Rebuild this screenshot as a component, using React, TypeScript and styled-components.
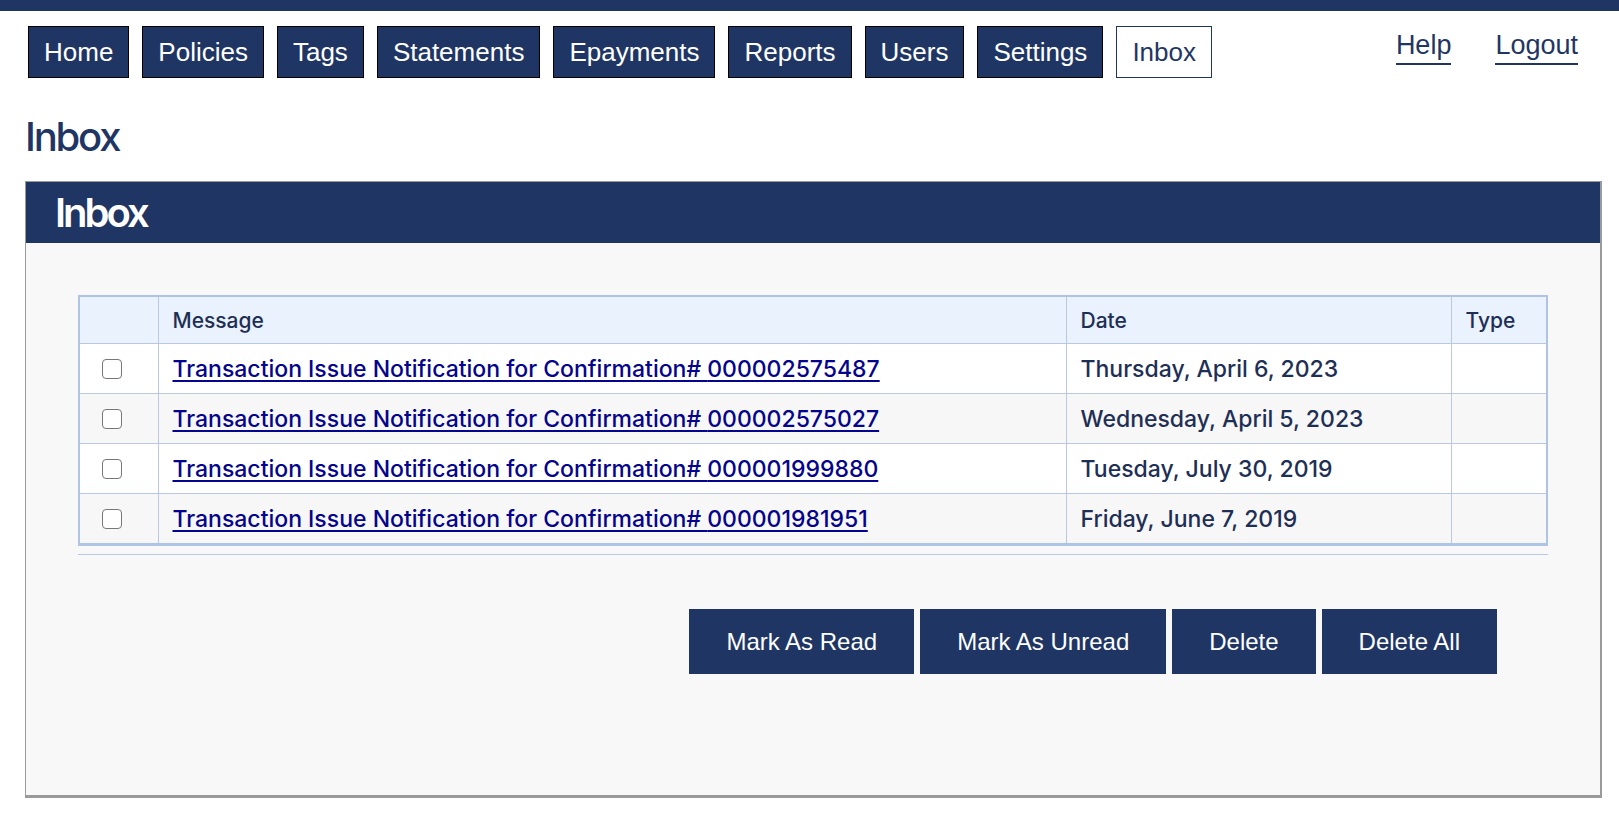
import styled, { createGlobalStyle } from 'styled-components'

const navy = '#1f3665'

const GlobalStyle = createGlobalStyle`
  html, body {
    margin: 0;
    padding: 0;
    background: #ffffff;
  }
  body {
    font-family: Inter, 'Liberation Sans', Arial, sans-serif;
  }
`

const TopBar = styled.div`
  height: 11px;
  background: ${navy};
`

const Header = styled.header`
  display: flex;
  justify-content: space-between;
  align-items: flex-start;
  padding: 15px 41px 0 28px;
`

const NavList = styled.nav`
  display: flex;
  gap: 13px;
`

const NavItem = styled.a<{ $active?: boolean }>`
  display: block;
  padding: 10px 15px;
  font-family: 'Liberation Sans', Arial, sans-serif;
  font-size: 26px;
  line-height: 30px;
  text-decoration: none;
  color: ${({ $active }) => ($active ? navy : '#ffffff')};
  background: ${({ $active }) => ($active ? '#ffffff' : navy)};
  border: 1px solid ${({ $active }) => ($active ? navy : '#000000')};
  cursor: pointer;
`

const UserLinks = styled.div`
  display: flex;
  gap: 44px;
  padding-top: 4px;
`

const UserLink = styled.a`
  font-family: 'Liberation Sans', Arial, sans-serif;
  font-size: 27px;
  line-height: 30px;
  color: ${navy};
  text-decoration: none;
  padding-bottom: 3px;
  border-bottom: 2px solid ${navy};
  cursor: pointer;
`

const PageTitle = styled.h1`
  margin: 35px 0 0 25px;
  font-family: Inter, sans-serif;
  font-size: 40px;
  line-height: 48px;
  font-weight: 500;
  letter-spacing: -2.2px;
  color: ${navy};
`

const Panel = styled.section`
  margin: 20px 17px 0 25px;
  border: 1px solid #9a9a9a;
  border-right-width: 2px;
  border-bottom-width: 3px;
  background: #f8f8f8;
`

const PanelHeader = styled.div`
  height: 61px;
  display: flex;
  align-items: center;
  padding-left: 29px;
  background: ${navy};
`

const PanelTitle = styled.h2`
  margin: 0;
  font-family: Inter, sans-serif;
  font-size: 40px;
  font-weight: 600;
  letter-spacing: -3px;
  color: #ffffff;
`

const PanelBody = styled.div`
  padding: 52px 52px 121px 52px;
`

const Table = styled.table`
  width: 100%;
  border-collapse: collapse;
  table-layout: fixed;
  border: 2px solid #afc3e4;
  border-bottom-width: 3px;
  font-family: Inter, sans-serif;
  font-size: 23px;
  font-weight: 500;
  color: #1e2f56;
`

const HeadCell = styled.th`
  height: 46px;
  padding: 0 14px;
  text-align: left;
  font-size: 21px;
  font-weight: 500;
  background: #eaf2fd;
  border: 1px solid #b9c9e5;
`

const Row = styled.tr<{ $alt: boolean }>`
  background: ${({ $alt }) => ($alt ? '#f7f7f7' : '#ffffff')};
`

const Cell = styled.td`
  height: 49px;
  padding: 0 14px;
  border: 1px solid #b9c9e5;
  white-space: nowrap;
`

const CheckCell = styled.td`
  height: 49px;
  padding: 0 0 0 22px;
  border: 1px solid #b9c9e5;
`

const Check = styled.input`
  appearance: none;
  display: block;
  width: 20px;
  height: 20px;
  margin: 0;
  border: 1.5px solid #777777;
  border-radius: 4px;
  background: #ffffff;
`

const MessageLink = styled.a`
  color: #04058c;
  text-decoration: underline;
  text-underline-offset: 3px;
  text-decoration-thickness: 2px;
  cursor: pointer;
`

const Pager = styled.div`
  height: 8px;
  border-bottom: 1px solid #b9c9e5;
`

const Actions = styled.div`
  display: flex;
  justify-content: flex-end;
  gap: 6px;
  margin-top: 54px;
  padding-right: 51px;
`

const ActionButton = styled.button`
  padding: 18px 37px;
  font-family: 'Liberation Sans', Arial, sans-serif;
  font-size: 24px;
  line-height: 29px;
  color: #ffffff;
  background: ${navy};
  border: none;
  border-radius: 0;
  cursor: pointer;
`

const navItems = ['Home', 'Policies', 'Tags', 'Statements', 'Epayments', 'Reports', 'Users', 'Settings', 'Inbox']

const messages = [
  { id: '000002575487', date: 'Thursday, April 6, 2023' },
  { id: '000002575027', date: 'Wednesday, April 5, 2023' },
  { id: '000001999880', date: 'Tuesday, July 30, 2019' },
  { id: '000001981951', date: 'Friday, June 7, 2019' },
]

const App = () => {
  return (
    <>
      <GlobalStyle />
      <TopBar />
      <Header>
        <NavList>
          {navItems.map((item) => (
            <NavItem key={item} $active={item === 'Inbox'}>
              {item}
            </NavItem>
          ))}
        </NavList>
        <UserLinks>
          <UserLink>Help</UserLink>
          <UserLink>Logout</UserLink>
        </UserLinks>
      </Header>

      <PageTitle>Inbox</PageTitle>

      <Panel>
        <PanelHeader>
          <PanelTitle>Inbox</PanelTitle>
        </PanelHeader>
        <PanelBody>
          <Table>
            <colgroup>
              <col style={{ width: 79 }} />
              <col style={{ width: 908 }} />
              <col style={{ width: 385 }} />
              <col />
            </colgroup>
            <thead>
              <tr>
                <HeadCell />
                <HeadCell>Message</HeadCell>
                <HeadCell>Date</HeadCell>
                <HeadCell>Type</HeadCell>
              </tr>
            </thead>
            <tbody>
              {messages.map((m, i) => (
                <Row key={m.id} $alt={i % 2 === 1}>
                  <CheckCell>
                    <Check type='checkbox' />
                  </CheckCell>
                  <Cell>
                    <MessageLink>Transaction Issue Notification for Confirmation# {m.id}</MessageLink>
                  </Cell>
                  <Cell>{m.date}</Cell>
                  <Cell />
                </Row>
              ))}
            </tbody>
          </Table>
          <Pager />
          <Actions>
            <ActionButton>Mark As Read</ActionButton>
            <ActionButton>Mark As Unread</ActionButton>
            <ActionButton>Delete</ActionButton>
            <ActionButton>Delete All</ActionButton>
          </Actions>
        </PanelBody>
      </Panel>
    </>
  )
}

export default App
